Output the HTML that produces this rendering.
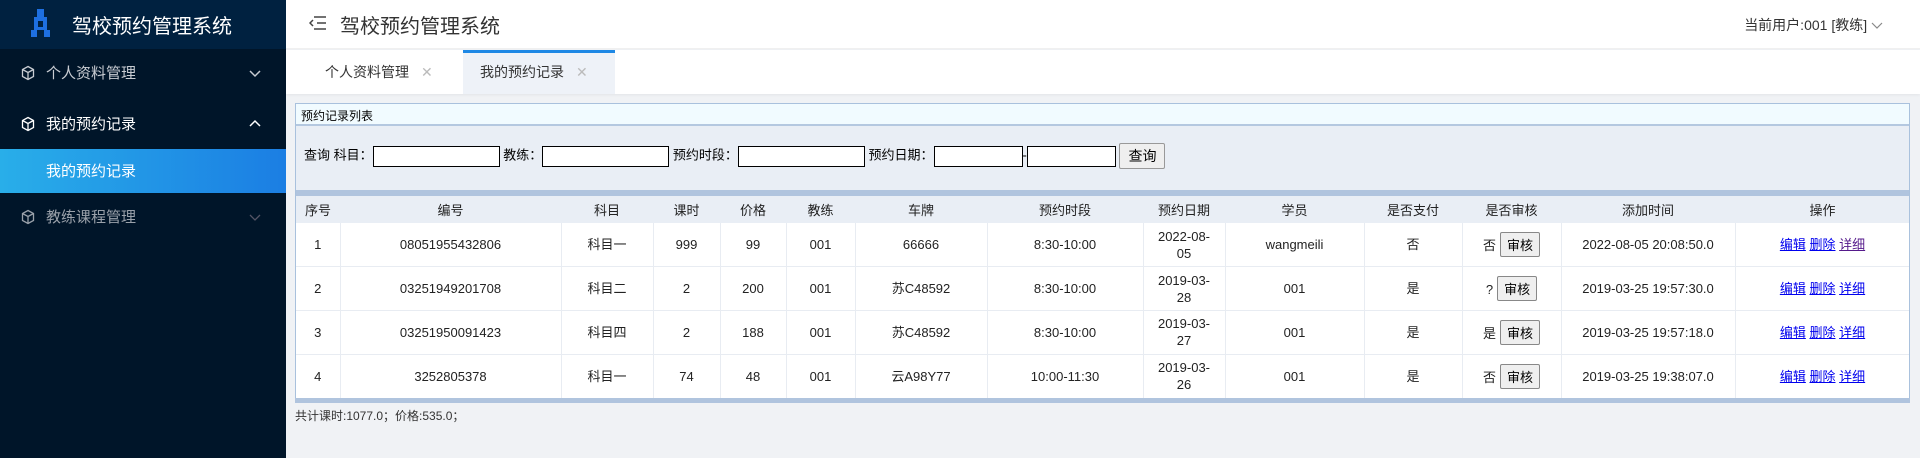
<!DOCTYPE html>
<html><head><meta charset="utf-8"><style>
*{box-sizing:border-box;margin:0;padding:0}
body{width:1920px;height:458px;overflow:hidden;background:#f0f2f5;font-family:"Liberation Sans","Noto Sans CJK SC",sans-serif;position:relative}
.side{position:absolute;left:0;top:0;width:286px;height:458px;background:#001529}
.logo{height:49px;background:#002140;position:relative}
.logo .t{position:absolute;left:72px;top:10px;color:#fff;font-size:20px}
.mi{position:absolute;left:0;width:286px;color:#c8ccd2;font-size:15px}
.mi .ic{position:absolute;left:20px;top:-8px}
.mi .tx{position:absolute;left:46px;top:-11px}
.mi .ar{position:absolute;right:24px;top:-7px}
.act{position:absolute;left:0;top:149px;width:286px;height:44px;background:linear-gradient(90deg,#29aee9,#1b7ee3);color:#fff;font-size:15px}
.act span{position:absolute;left:46px;top:11px}
.hdr{position:absolute;left:286px;top:0;right:0;height:49px;background:#fff;border-bottom:1px solid #f0f0f0}
.hdr .t{position:absolute;left:54px;top:10px;font-size:20px;color:#333}
.hdr .u{position:absolute;right:37px;top:15px;font-size:14px;color:#333}
.tabs{position:absolute;left:286px;top:50px;right:0;height:44px;background:#fff;box-shadow:0 1px 3px rgba(0,0,0,.06)}
.tab{position:absolute;top:0;height:44px;font-size:14px;color:#333;padding-top:12px}
.tab .x{color:#bbb;margin-left:12px}
.panel{position:absolute;left:295px;top:103px;width:1615px;height:300px;border:1px solid #a9c1dd;background:#fff;overflow:hidden}
.ptit{height:22px;background:#f1fbff;font-size:12px;padding:3px 5px;border-bottom:2px solid #b4c8e0}
.srch{height:70px;background:#e9eef5;font-size:13px;padding:17px 8px;border-bottom:6px solid #b0c4de;white-space:nowrap}
.srch input{width:127px;height:21px;border:1px solid #000;vertical-align:middle;background:#fff}
.srch .s{width:89px}
.srch button{height:26px;padding:0 8px;font-size:14px;border:1px solid #999;border-radius:2px;background:#efefef;vertical-align:middle;font-family:inherit}
table{border-collapse:collapse;table-layout:fixed;width:1614px;font-size:13px;color:#222}
th{height:27px;background:#e9eef5;font-weight:normal;font-size:13px}
td{height:43.75px;text-align:center;border-right:1px solid #e8ecf2;border-bottom:1px solid #e8ecf2;line-height:17px}
td button{font-family:inherit;font-size:13px;padding:2px 6px;border:1px solid #888;border-radius:2px;background:#efefef;margin-left:4px}
a{color:#00e;text-decoration:underline}
.bar{position:absolute;left:295px;top:398px;width:1615px;height:5px;background:#b0c4de}
.foot{position:absolute;left:295px;top:407px;font-size:12px;color:#333}
</style></head><body>
<div class="side">
 <div class="logo"><svg style="position:absolute;left:0;top:0" width="60" height="49" viewBox="0 0 60 49"><path fill="#1e6fe0" fill-rule="evenodd" d="M37 9h7v8h3v13h3v7h-6v-7h-7v7h-6v-7h3V17h3z M38 21h5v6h-5z"/></svg><span class="t">驾校预约管理系统</span></div>
 <div class="mi" style="top:73px"><svg class="ic" width="16" height="16" viewBox="0 0 16 16" fill="none" stroke="#c8ccd2" stroke-width="1.3"><path d="M8 1.5l5.5 3v7L8 14.5 2.5 11.5v-7z M2.5 4.5L8 7.5l5.5-3 M8 7.5v7"/></svg><span class="tx">个人资料管理</span><svg class="ar" width="14" height="14" viewBox="0 0 14 14" fill="none" stroke="#c8ccd2" stroke-width="1.5"><path d="M2 5l5 5 5-5"/></svg></div>
 <div class="mi" style="top:124px;color:#fff"><svg class="ic" width="16" height="16" viewBox="0 0 16 16" fill="none" stroke="#fff" stroke-width="1.3"><path d="M8 1.5l5.5 3v7L8 14.5 2.5 11.5v-7z M2.5 4.5L8 7.5l5.5-3 M8 7.5v7"/></svg><span class="tx">我的预约记录</span><svg class="ar" width="14" height="14" viewBox="0 0 14 14" fill="none" stroke="#fff" stroke-width="1.5"><path d="M2 9l5-5 5 5"/></svg></div>
 <div class="act"><span>我的预约记录</span></div>
 <div class="mi" style="top:217px;color:#9aa1aa"><svg class="ic" width="16" height="16" viewBox="0 0 16 16" fill="none" stroke="#9aa1aa" stroke-width="1.3"><path d="M8 1.5l5.5 3v7L8 14.5 2.5 11.5v-7z M2.5 4.5L8 7.5l5.5-3 M8 7.5v7"/></svg><span class="tx">教练课程管理</span><svg class="ar" width="14" height="14" viewBox="0 0 14 14" fill="none" stroke="#556" stroke-width="1.3"><path d="M2 5l5 5 5-5"/></svg></div>
</div>
<div class="hdr"><svg style="position:absolute;left:23px;top:15px" width="18" height="16" viewBox="0 0 18 16" fill="none" stroke="#444" stroke-width="1.5"><path d="M5 2h12M8 8h9M5 14h12M4 5L1 8l3 3"/></svg><span class="t">驾校预约管理系统</span><span class="u">当前用户:001 [教练] <svg width="12" height="10" viewBox="0 0 12 10" fill="none" stroke="#888" stroke-width="1.2"><path d="M1 3l5 5 5-5"/></svg></span></div>
<div class="tabs">
 <div class="tab" style="left:39px">个人资料管理<span class="x">✕</span></div>
 <div class="tab" style="left:177px;width:152px;background:#eef2f8;border-top:3px solid #1e88e5;padding-left:17px;padding-top:9px">我的预约记录<span class="x">✕</span></div>
</div>
<div class="panel">
 <div class="ptit">预约记录列表</div>
 <div class="srch">查询 科目：<input> 教练：<input> 预约时段：<input> 预约日期：<input class="s">-<input class="s"> <button>查询</button></div>
 <table>
 <colgroup><col style="width:44px"><col style="width:221px"><col style="width:92px"><col style="width:67px"><col style="width:66px"><col style="width:69px"><col style="width:132px"><col style="width:156px"><col style="width:82px"><col style="width:139px"><col style="width:98px"><col style="width:99px"><col style="width:174px"><col style="width:175px"></colgroup>
 <tr><th>序号</th><th>编号</th><th>科目</th><th>课时</th><th>价格</th><th>教练</th><th>车牌</th><th>预约时段</th><th>预约日期</th><th>学员</th><th>是否支付</th><th>是否审核</th><th>添加时间</th><th>操作</th></tr>
 <tr><td>1</td><td>08051955432806</td><td>科目一</td><td>999</td><td>99</td><td>001</td><td>66666</td><td>8:30-10:00</td><td>2022-08-<br>05</td><td>wangmeili</td><td>否</td><td>否<button>审核</button></td><td>2022-08-05 20:08:50.0</td><td><a>编辑</a> <a>删除</a> <a style="color:#551a8b">详细</a></td></tr>
 <tr><td>2</td><td>03251949201708</td><td>科目二</td><td>2</td><td>200</td><td>001</td><td>苏C48592</td><td>8:30-10:00</td><td>2019-03-<br>28</td><td>001</td><td>是</td><td>?<button>审核</button></td><td>2019-03-25 19:57:30.0</td><td><a>编辑</a> <a>删除</a> <a>详细</a></td></tr>
 <tr><td>3</td><td>03251950091423</td><td>科目四</td><td>2</td><td>188</td><td>001</td><td>苏C48592</td><td>8:30-10:00</td><td>2019-03-<br>27</td><td>001</td><td>是</td><td>是<button>审核</button></td><td>2019-03-25 19:57:18.0</td><td><a>编辑</a> <a>删除</a> <a>详细</a></td></tr>
 <tr><td>4</td><td>3252805378</td><td>科目一</td><td>74</td><td>48</td><td>001</td><td>云A98Y77</td><td>10:00-11:30</td><td>2019-03-<br>26</td><td>001</td><td>是</td><td>否<button>审核</button></td><td>2019-03-25 19:38:07.0</td><td><a>编辑</a> <a>删除</a> <a>详细</a></td></tr>
 </table>
</div>
<div class="bar"></div>
<div class="foot">共计课时:1077.0；价格:535.0；</div>
</body></html>
